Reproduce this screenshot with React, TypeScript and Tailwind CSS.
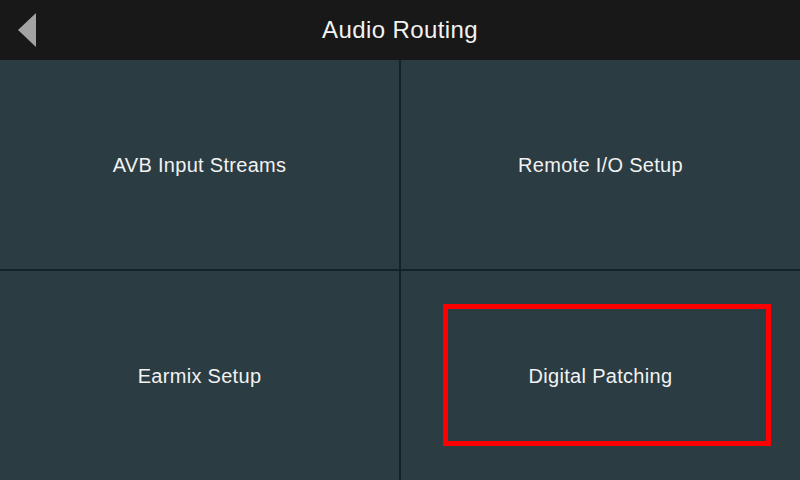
import React from "react";

const Cell = ({ label, children }: { label: string; children?: React.ReactNode }) => (
  <div className="relative flex items-center justify-center bg-[#2b3c42]">
    <span className="text-[20px] tracking-[0.3px] text-[#f2f2f2]">{label}</span>
    {children}
  </div>
);

export default function App() {
  return (
    <div
      className="flex h-[480px] w-[800px] flex-col overflow-hidden bg-[#142326]"
      style={{ fontFamily: '"Liberation Sans", Arial, sans-serif' }}
    >
      <div className="relative flex h-[60px] shrink-0 items-center justify-center bg-[#181818]">
        <svg className="absolute left-0 top-0" width="60" height="60" viewBox="0 0 60 60">
          <polygon points="36,13 36,47 18,30" fill="#a3a3a3" />
        </svg>
        <span className="text-[24px] tracking-[0.4px] text-[#f2f2f2]">Audio Routing</span>
      </div>
      <div className="grid flex-1 grid-cols-[399px_399px] grid-rows-[209px_209px] gap-[2px]">
        <Cell label="AVB Input Streams" />
        <Cell label="Remote I/O Setup" />
        <Cell label="Earmix Setup" />
        <Cell label="Digital Patching">
          <div className="pointer-events-none absolute left-[42px] top-[33px] h-[142px] w-[328px] border-[5px] border-[#ff0000]" />
        </Cell>
      </div>
    </div>
  );
}
